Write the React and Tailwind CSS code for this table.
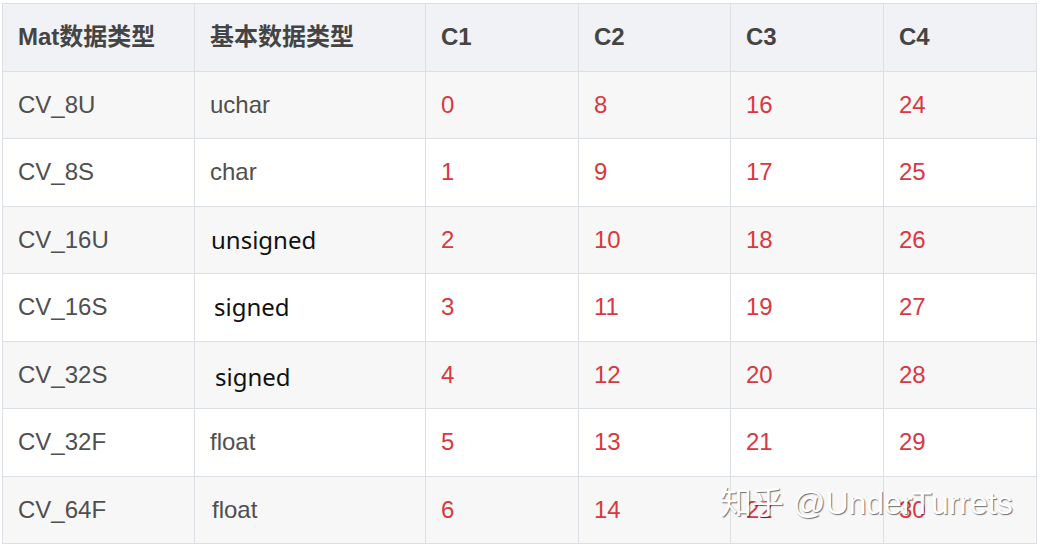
import React from "react";

const rows = [
  { a: "CV_8U", b: "uchar", bt: "arial", n: [0, 8, 16, 24] },
  { a: "CV_8S", b: "char", bt: "arial", n: [1, 9, 17, 25] },
  { a: "CV_16U", b: "unsigned", bt: "yahei", n: [2, 10, 18, 26] },
  { a: "CV_16S", b: "signed", bt: "yahei2", n: [3, 11, 19, 27] },
  { a: "CV_32S", b: "signed", bt: "yahei3", n: [4, 12, 20, 28] },
  { a: "CV_32F", b: "float", bt: "arial", n: [5, 13, 21, 29] },
  { a: "CV_64F", b: "float", bt: "arial2", n: [6, 14, 22, 30] },
];

function BCell({ b, bt }) {
  if (bt === "arial") return <span className="pl-[0px]">{b}</span>;
  if (bt === "arial2") return <span className="pl-[2px]">{b}</span>;
  const pad =
    bt === "yahei" ? "pl-[1px] pt-[2px]" : bt === "yahei2" ? "pl-[4px] pb-[0px]" : "pl-[5px] pt-[6px]";
  return (
    <span
      className={`inline-block text-[#111] text-[24px] ${pad}`}
      style={{ fontFamily: '"Noto Sans", "Open Sans", sans-serif' }}
    >
      {b}
    </span>
  );
}

export default function App() {
  const headCell =
    "border border-[#dcdfe3] px-[15px] text-left align-middle font-bold text-[#444]";
  const cell = "border border-[#dcdfe3] px-[15px] align-middle";
  return (
    <div className="relative w-[1040px] h-[547px] bg-white overflow-hidden">
      <div className="pt-[3px] pl-[2px]">
        <table
          className="border-collapse table-fixed w-[1034px] text-[24px] text-[#4f4f4f]"
          style={{ fontFamily: '"Liberation Sans", "Noto Sans CJK SC", Arial, sans-serif' }}
        >
          <colgroup>
            <col className="w-[192px]" />
            <col className="w-[231px]" />
            <col className="w-[153px]" />
            <col className="w-[152px]" />
            <col className="w-[153px]" />
            <col className="w-[153px]" />
          </colgroup>
          <thead>
            <tr className="h-[67.5px] bg-[#f0f2f5]">
              <th className={headCell}>Mat数据类型</th>
              <th className={headCell}>基本数据类型</th>
              <th className={headCell}>C1</th>
              <th className={headCell}>C2</th>
              <th className={headCell}>C3</th>
              <th className={headCell}>C4</th>
            </tr>
          </thead>
          <tbody>
            {rows.map((r, i) => (
              <tr
                key={r.a}
                className={`h-[67.5px] ${i % 2 === 0 ? "bg-[#f7f7f7]" : "bg-white"}`}
              >
                <td className={cell}>{r.a}</td>
                <td className={cell}>
                  <BCell b={r.b} bt={r.bt} />
                </td>
                {r.n.map((v, j) => (
                  <td key={j} className={`${cell} text-[#d9383f]`}>
                    {v}
                  </td>
                ))}
              </tr>
            ))}
          </tbody>
        </table>
      </div>
      <div
        className="absolute left-[720px] top-[487px] text-[32px] leading-none text-white whitespace-nowrap [text-shadow:1px_1px_1px_rgba(0,0,0,0.55)]"
        style={{ fontFamily: '"Liberation Sans", "Noto Sans CJK SC", sans-serif' }}
      >
        知乎 @UnderTurrets
      </div>
    </div>
  );
}
